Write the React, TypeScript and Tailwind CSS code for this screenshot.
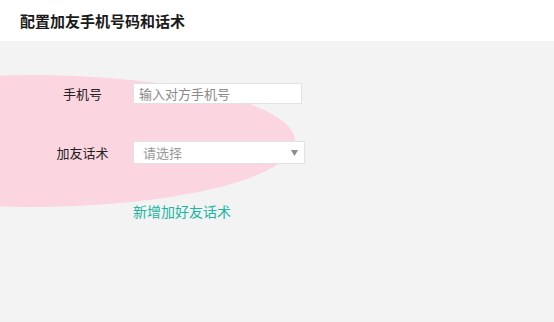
import React from "react";

export default function App() {
  const font = { fontFamily: '"Noto Sans CJK SC", "Noto Sans", sans-serif' };
  return (
    <div className="w-[554px] h-[322px] bg-[#f3f3f3] overflow-hidden relative" style={font}>
      <div className="h-[41px] bg-white flex items-center px-5">
        <span className="text-[15px] font-bold text-[#1a1a1a] leading-none">配置加友手机号码和话术</span>
      </div>
      <div className="relative">
        <div className="absolute left-[-237px] top-[34px] w-[532px] h-[132px] rounded-[50%] bg-[#fbd5e0]" />
        <div className="relative pt-[42px] pl-[40px]">
          <div className="flex items-center h-[21px]">
            <div className="w-[85px] text-center text-[13px] text-[#222]">手机号</div>
            <input
              className="ml-[8px] w-[169px] h-[21px] bg-white border border-[#e2e2e2] px-[5px] text-[13px] outline-none placeholder:text-[#8a8a8a]"
              placeholder="输入对方手机号"
              style={font}
            />
          </div>
          <div className="flex items-center h-[23px] mt-[37px]">
            <div className="w-[85px] text-center text-[13px] text-[#222]">加友话术</div>
            <div className="ml-[8px] w-[172px] h-[23px] bg-white border border-[#e2e2e2] flex items-center justify-between pl-[9px] pr-[6px]">
              <span className="text-[13px] text-[#999]">请选择</span>
              <svg width="7" height="6" viewBox="0 0 7 6">
                <polygon points="0,0 7,0 3.5,6" fill="#8c8c8c" />
              </svg>
            </div>
          </div>
          <div className="mt-[40px] ml-[93px] text-[14px] text-[#22b5a4] leading-none">新增加好友话术</div>
        </div>
      </div>
    </div>
  );
}
